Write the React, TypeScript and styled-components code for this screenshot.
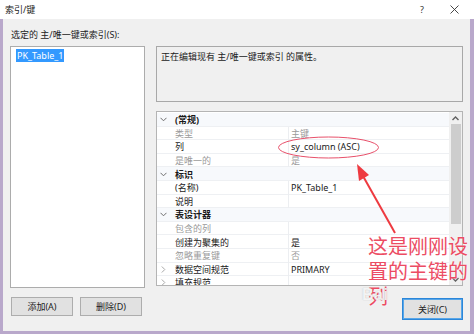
import React from "react";
import styled, { createGlobalStyle } from "styled-components";

const Global = createGlobalStyle`
  html, body { margin: 0; padding: 0; }
  body {
    background: #b9a8cb;
    font-family: "Noto Sans", "Noto Sans CJK SC", sans-serif;
    font-size: 9px;
    color: #1a1a1a;
  }
`;

const Window = styled.div`
  position: relative;
  width: 474px;
  height: 334px;
  display: flex;
  flex-direction: column;
  overflow: hidden;
  background: #b9a8cb;
`;

const TitleBar = styled.div`
  height: 19px;
  flex: none;
  background: #ffffff;
  display: flex;
  align-items: center;
  padding: 0 4px 0 5px;
  font-size: 9px;
  color: #222;
`;

const Title = styled.span`
  flex: 1;
`;

const TitleButton = styled.span`
  width: 32px;
  display: flex;
  justify-content: center;
  align-items: center;
  color: #333;
  font-size: 9px;
`;

const Body = styled.div`
  height: 312px;
  margin: 0 4px 0 3px;
  background: #f0f0f0;
  box-sizing: border-box;
  padding: 10px 7px 0 7px;
  display: flex;
  gap: 11px;
`;

const LeftCol = styled.div`
  width: 135px;
  display: flex;
  flex-direction: column;
`;

const RightCol = styled.div`
  flex: 1;
  display: flex;
  flex-direction: column;
`;

const Label = styled.div`
  height: 17px;
  line-height: 12px;
  padding-left: 1px;
  color: #222;
`;

const ListBox = styled.div`
  height: 242px;
  box-sizing: border-box;
  background: #fff;
  border: 1px solid #acacac;
  padding: 2px 5px;
`;

const Selected = styled.span`
  display: inline-block;
  background: #3399ff;
  color: #fff;
  padding: 0 1px;
  line-height: 13px;
`;

const ButtonRow = styled.div<{ $align?: string; $top: number }>`
  display: flex;
  gap: 7px;
  margin-top: ${(p) => p.$top}px;
  padding-left: 1px;
  justify-content: ${(p) => p.$align || "flex-start"};
`;

const Button = styled.div<{ $primary?: boolean; $h: number; $w: number }>`
  width: ${(p) => p.$w}px;
  height: ${(p) => p.$h}px;
  box-sizing: border-box;
  background: #e1e1e1;
  border: 1px solid ${(p) => (p.$primary ? "#2b86d9" : "#adadad")};
  box-shadow: ${(p) => (p.$primary ? "inset 0 0 0 1px #58a6e8" : "none")};
  display: flex;
  align-items: center;
  justify-content: center;
  color: #222;
`;

const DescBox = styled.div`
  height: 56px;
  box-sizing: border-box;
  border: 1px solid #a8a8a8;
  background: #f0f0f0;
  padding: 4px 4px;
  line-height: 12px;
  color: #222;
`;

const Grid = styled.div`
  margin-top: 9px;
  height: 175px;
  box-sizing: border-box;
  border: 1px solid #b4b4b4;
  background: #fff;
  display: flex;
  overflow: hidden;
`;

const Rows = styled.div`
  flex: 1;
  display: flex;
  flex-direction: column;
  padding-top: 1px;
`;

const Row = styled.div<{ $cat?: boolean }>`
  height: 13.6px;
  flex: none;
  display: grid;
  grid-template-columns: 12px 119px 1fr;
  background: ${(p) => (p.$cat ? "#f7f9fc" : "#ffffff")};
  box-shadow: inset 0 -1px 0 #eef0f3;
`;

const Margin = styled.div`
  display: flex;
  align-items: center;
  justify-content: center;
  padding-left: 1px;
`;

const Name = styled.div<{ $cat?: boolean; $dim?: boolean }>`
  display: flex;
  align-items: center;
  padding-left: 6px;
  font-weight: ${(p) => (p.$cat ? 700 : 400)};
  color: ${(p) => (p.$dim ? "#9a9a9a" : "#1a1a1a")};
  white-space: nowrap;
`;

const Value = styled.div<{ $dim?: boolean; $cat?: boolean }>`
  display: flex;
  align-items: center;
  padding-left: 2px;
  border-left: ${(p) => (p.$cat ? "none" : "1px solid #eceef1")};
  color: ${(p) => (p.$dim ? "#9a9a9a" : "#1a1a1a")};
  white-space: nowrap;
`;

const ScrollBar = styled.div`
  width: 13px;
  flex: none;
  background: #f0f0f0;
  display: flex;
  flex-direction: column;
  align-items: center;
`;

const ScrollArrow = styled.div`
  height: 12px;
  width: 100%;
  display: flex;
  align-items: center;
  justify-content: center;
  flex: none;
`;

const Thumb = styled.div`
  width: 10px;
  height: 100px;
  background: #cdcdcd;
  flex: none;
`;

const Track = styled.div`
  flex: 1;
`;

const Overlay = styled.svg`
  position: absolute;
  left: 0;
  top: 0;
  pointer-events: none;
`;

const Note = styled.div`
  position: absolute;
  left: 368px;
  top: 233px;
  width: 106px;
  font-family: "Noto Sans CJK SC", sans-serif;
  font-size: 20px;
  line-height: 25px;
  color: #ec4c63;
  text-shadow: 0 0 2px rgba(255, 255, 255, 0.8);
  pointer-events: none;
`;

const Watermark = styled.div`
  position: absolute;
  left: 362px;
  top: 286px;
  font-family: "Liberation Sans", sans-serif;
  font-size: 16px;
  font-weight: 700;
  color: rgba(255, 255, 255, 0.85);
  text-shadow: 0 0 1px rgba(120, 120, 120, 0.5);
  letter-spacing: 0.5px;
  pointer-events: none;
`;

const Down = () => (
  <svg width="7" height="5" viewBox="0 0 7 5">
    <polyline points="0.5,0.8 3.5,3.8 6.5,0.8" fill="none" stroke="#6e6e6e" strokeWidth="1" />
  </svg>
);
const RightChev = () => (
  <svg width="5" height="7" viewBox="0 0 5 7">
    <polyline points="0.8,0.5 3.8,3.5 0.8,6.5" fill="none" stroke="#a8a8a8" strokeWidth="1" />
  </svg>
);
const Up = () => (
  <svg width="7" height="5" viewBox="0 0 7 5">
    <polyline points="0.5,4 3.5,1 6.5,4" fill="none" stroke="#606060" strokeWidth="1.4" />
  </svg>
);
const DownS = () => (
  <svg width="7" height="5" viewBox="0 0 7 5">
    <polyline points="0.5,1 3.5,4 6.5,1" fill="none" stroke="#606060" strokeWidth="1.4" />
  </svg>
);

type R = { cat?: boolean; icon?: "down" | "right"; name: string; value?: string; dimName?: boolean; dimValue?: boolean };
const rows: R[] = [
  { cat: true, icon: "down", name: "(常规)" },
  { name: "类型", value: "主键", dimName: true, dimValue: true },
  { name: "列", value: "sy_column (ASC)" },
  { name: "是唯一的", value: "是", dimName: true, dimValue: true },
  { cat: true, icon: "down", name: "标识" },
  { name: "(名称)", value: "PK_Table_1" },
  { name: "说明", value: "" },
  { cat: true, icon: "down", name: "表设计器" },
  { name: "包含的列", value: "", dimName: true },
  { name: "创建为聚集的", value: "是" },
  { name: "忽略重复键", value: "否", dimName: true, dimValue: true },
  { icon: "right", name: "数据空间规范", value: "PRIMARY" },
  { icon: "right", name: "填充规范", value: "" },
];

export default function App() {
  return (
    <Window>
      <Global />
      <TitleBar>
        <Title>索引/键</Title>
        <TitleButton>?</TitleButton>
        <TitleButton>
          <svg width="9" height="9" viewBox="0 0 9 9">
            <path d="M0.5 0.5 L8.5 8.5 M8.5 0.5 L0.5 8.5" stroke="#333" strokeWidth="0.9" />
          </svg>
        </TitleButton>
      </TitleBar>
      <Body>
        <LeftCol>
          <Label>选定的 主/唯一键或索引(S):</Label>
          <ListBox>
            <Selected>PK_Table_1</Selected>
          </ListBox>
          <ButtonRow $top={9}>
            <Button $w={62} $h={19}>添加(A)</Button>
            <Button $w={62} $h={19}>删除(D)</Button>
          </ButtonRow>
        </LeftCol>
        <RightCol>
          <Label />
          <DescBox>正在编辑现有 主/唯一键或索引 的属性。</DescBox>
          <Grid>
            <Rows>
              {rows.map((r, i) => (
                <Row key={i} $cat={r.cat}>
                  <Margin>{r.icon === "down" ? <Down /> : r.icon === "right" ? <RightChev /> : null}</Margin>
                  <Name $cat={r.cat} $dim={r.dimName}>{r.name}</Name>
                  <Value $cat={r.cat} $dim={r.dimValue}>{r.value}</Value>
                </Row>
              ))}
            </Rows>
            <ScrollBar>
              <ScrollArrow><Up /></ScrollArrow>
              <Thumb />
              <Track />
              <ScrollArrow><DownS /></ScrollArrow>
            </ScrollBar>
          </Grid>
          <ButtonRow $top={12} $align="flex-end">
            <Button $primary $w={61} $h={22}>关闭(C)</Button>
          </ButtonRow>
        </RightCol>
      </Body>
      <Overlay width="474" height="334" viewBox="0 0 474 334">
        <ellipse cx="328.5" cy="147.5" rx="50" ry="10.5" fill="none" stroke="#e8506a" strokeWidth="1" />
        <line x1="395" y1="233" x2="363" y2="176" stroke="#ee3a40" strokeWidth="2" />
        <polygon points="357,164 359,181 369,175" fill="#ee3a40" />
      </Overlay>
      <Note>这是刚刚设置的主键的列</Note>
      <Watermark>Bai</Watermark>
    </Window>
  );
}
